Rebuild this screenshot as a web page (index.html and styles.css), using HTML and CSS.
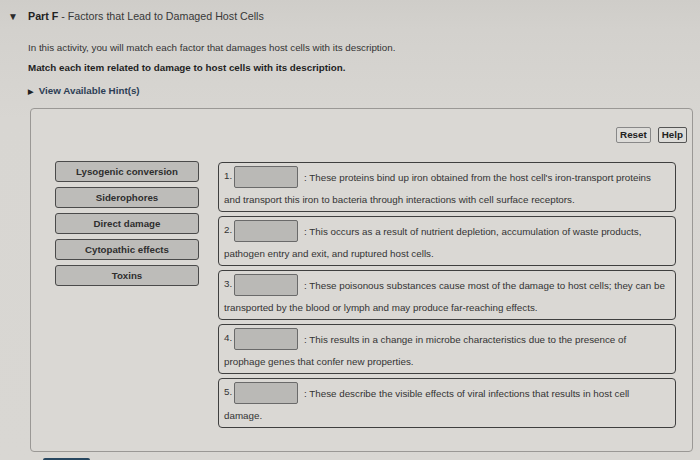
FILE: index.html
```html
<!DOCTYPE html>
<html>
<head>
<meta charset="utf-8">
<link rel="stylesheet" href="styles.css">
</head>
<body>
<div class="page">
  <div class="header">
    <span class="caret">&#9660;</span>
    <span class="title"><b>Part F</b> - Factors that Lead to Damaged Host Cells</span>
  </div>
  <div class="intro">
    <p class="para">In this activity, you will match each factor that damages host cells with its description.</p>
    <p class="para bold">Match each item related to damage to host cells with its description.</p>
    <p class="hint"><span class="hint-caret">&#9654;</span> View Available Hint(s)</p>
  </div>
  <div class="panel">
    <div class="toolbar">
      <button class="tbtn">Reset</button>
      <button class="tbtn">Help</button>
    </div>
    <div class="work">
      <div class="labels">
        <div class="label">Lysogenic conversion</div>
        <div class="label">Siderophores</div>
        <div class="label">Direct damage</div>
        <div class="label">Cytopathic effects</div>
        <div class="label">Toxins</div>
      </div>
      <div class="targets">
        <div class="target">
          <div class="row"><span class="num">1.</span><span class="drop"></span><span class="desc">: These proteins bind up iron obtained from the host cell's iron-transport proteins</span></div>
          <div class="cont">and transport this iron to bacteria through interactions with cell surface receptors.</div>
        </div>
        <div class="target">
          <div class="row"><span class="num">2.</span><span class="drop"></span><span class="desc">: This occurs as a result of nutrient depletion, accumulation of waste products,</span></div>
          <div class="cont">pathogen entry and exit, and ruptured host cells.</div>
        </div>
        <div class="target">
          <div class="row"><span class="num">3.</span><span class="drop"></span><span class="desc">: These poisonous substances cause most of the damage to host cells; they can be</span></div>
          <div class="cont">transported by the blood or lymph and may produce far-reaching effects.</div>
        </div>
        <div class="target">
          <div class="row"><span class="num">4.</span><span class="drop"></span><span class="desc">: This results in a change in microbe characteristics due to the presence of</span></div>
          <div class="cont">prophage genes that confer new properties.</div>
        </div>
        <div class="target">
          <div class="row"><span class="num">5.</span><span class="drop"></span><span class="desc">: These describe the visible effects of viral infections that results in host cell</span></div>
          <div class="cont">damage.</div>
        </div>
      </div>
    </div>
  </div>
  <div class="submit-row"><div class="submit"></div></div>
</div>
</body>
</html>
```

FILE: styles.css
```css
html, body {
  margin: 0;
  padding: 0;
}
body {
  width: 700px;
  height: 460px;
  overflow: hidden;
  background: linear-gradient(180deg, #cfcdc9 0px, #d3d1cd 30px, #d8d6d2 120px, #d9d7d3 460px);
  font-family: "Liberation Sans", Arial, sans-serif;
  color: #2e2e2e;
}
.page {
  display: flex;
  flex-direction: column;
}
.header {
  display: flex;
  align-items: center;
  height: 34px;
  padding-left: 8px;
  box-sizing: border-box;
  padding-bottom: 2px;
}
.caret {
  font-size: 10px;
  color: #2a2a2a;
  width: 20px;
}
.title {
  font-size: 10.7px;
  color: #383838;
}
.title b {
  color: #222;
}
.intro {
  padding-left: 28px;
}
.para {
  margin: 0;
  font-size: 9.8px;
  line-height: 12px;
  color: #333;
}
.para:first-child {
  margin-top: 8px;
}
.para.bold {
  font-weight: bold;
  color: #1f1f1f;
  margin-top: 8px;
}
.hint {
  margin: 11px 0 0 0;
  font-size: 9.8px;
  line-height: 12px;
  font-weight: bold;
  color: #2d3e55;
}
.hint-caret {
  font-size: 7px;
  color: #222;
  margin-right: 3px;
}
.panel {
  margin: 10px 0 0 30px;
  width: 663px;
  height: 344px;
  box-sizing: border-box;
  border: 1px solid #9a9895;
  border-radius: 4px;
  background: #dad8d4;
  display: flex;
  flex-direction: column;
  padding: 18px 0 0 24px;
}
.toolbar {
  display: flex;
  justify-content: flex-end;
  gap: 7px;
  padding-right: 5px;
}
.tbtn {
  font-family: "Liberation Sans", Arial, sans-serif;
  font-size: 9.8px;
  font-weight: bold;
  color: #222;
  background: #dddcd9;
  border: 1px solid #555;
  border-radius: 2px;
  padding: 0 3px;
  height: 16px;
  line-height: 14px;
}
.tbtn:first-child {
  border-color: #888;
}
.work {
  display: flex;
  gap: 19px;
  margin-top: 18px;
}
.labels {
  display: flex;
  flex-direction: column;
  gap: 5px;
  width: 144px;
}
.label {
  height: 21px;
  box-sizing: border-box;
  border: 1px solid #4a4a4a;
  border-radius: 3px;
  background: #bdbcb9;
  font-size: 9.7px;
  font-weight: bold;
  color: #2e2e2e;
  display: flex;
  align-items: center;
  justify-content: center;
  padding-bottom: 1px;
}
.targets {
  display: flex;
  flex-direction: column;
  gap: 4px;
  width: 458px;
  margin-top: 1px;
}
.target {
  height: 50px;
  box-sizing: border-box;
  border: 1.5px solid #3f3f3f;
  border-radius: 4px;
  padding: 2px 5px 0 5px;
  display: flex;
  flex-direction: column;
}
.row {
  display: flex;
  align-items: center;
  height: 23px;
  font-size: 9.8px;
  color: #333;
}
.num {
  width: 10px;
  align-self: flex-start;
  margin-top: 5px;
}
.drop {
  width: 64px;
  height: 22px;
  box-sizing: border-box;
  border: 1px solid #6a6a6a;
  border-radius: 2px;
  background: #bab9b6;
  margin-right: 6px;
}
.desc {
  white-space: nowrap;
  padding-top: 1px;
}
.cont {
  margin-top: 6px;
  font-size: 9.8px;
  color: #333;
  white-space: nowrap;
}
.submit-row {
  padding-left: 43px;
  margin-top: 6px;
}
.submit {
  width: 47px;
  height: 20px;
  border-radius: 2px;
  background: #274760;
}
```
